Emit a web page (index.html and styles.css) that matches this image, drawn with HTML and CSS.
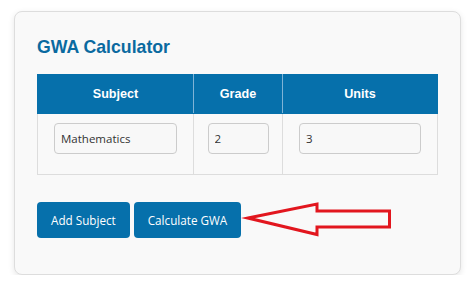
FILE: index.html
```html
<!DOCTYPE html>
<html>
<head>
<meta charset="utf-8">
<link rel="stylesheet" href="styles.css">
</head>
<body>
<div class="card">
  <h2 class="title">GWA Calculator</h2>
  <table class="gwa">
    <colgroup><col class="c1"><col class="c2"><col class="c3"></colgroup>
    <thead>
      <tr><th>Subject</th><th>Grade</th><th>Units</th></tr>
    </thead>
    <tbody>
      <tr>
        <td><input class="in in-subject" type="text" value="Mathematics"></td>
        <td><input class="in in-grade" type="text" value="2"></td>
        <td><input class="in in-units" type="text" value="3"></td>
      </tr>
    </tbody>
  </table>
  <div class="actions">
    <button class="btn">Add Subject</button>
    <button class="btn">Calculate GWA</button>
  </div>
</div>
<svg class="arrow" viewBox="0 0 474 286" width="474" height="286">
  <polygon points="248,218 317,204 317,211 389.5,211 389.5,227 317,227 317,234.5" fill="none" stroke="#e2161e" stroke-width="3" stroke-linejoin="miter" stroke-miterlimit="12"/>
</svg>
</body>
</html>
```
FILE: styles.css
```css
html, body {
  margin: 0;
  background: #ffffff;
}
body {
  padding: 11px 0 0 14px;
  font-family: "Open Sans", "Liberation Sans", sans-serif;
}
.card {
  width: 400px;
  padding: 25px 23px 36px 22px;
  background: #f9f9f9;
  border: 1px solid #dddddd;
  border-radius: 8px;
  box-shadow: 0 2px 6px rgba(0, 0, 0, 0.10);
}
.title {
  margin: 0 0 16px 0;
  font-family: "Liberation Sans", Arial, sans-serif;
  font-weight: bold;
  font-size: 17.7px;
  line-height: 21px;
  color: #0a6aa0;
}
.gwa {
  width: 400px;
  table-layout: fixed;
  border-collapse: collapse;
}
.c1 { width: 156px; }
.c2 { width: 89px; }
.c3 { width: 155px; }
.gwa th {
  background: #0670ab;
  color: #ffffff;
  font-family: "Liberation Sans", Arial, sans-serif;
  font-weight: bold;
  font-size: 12.6px;
  line-height: 14px;
  padding: 12px 0;
  border: 1px solid #0670ab;
  text-align: center;
}
.gwa th:not(:last-child) {
  border-right-color: #7fb3d6;
}
.gwa td {
  border: 1px solid #dddddd;
  padding: 9px 0 10px 0;
  text-align: center;
}
.in {
  display: block;
  box-sizing: border-box;
  height: 31px;
  margin: 0 auto 10px auto;
  padding: 0 6px;
  border: 1px solid #cccccc;
  border-radius: 4px;
  background: #f8f8f8;
  font-family: "Open Sans", "Liberation Sans", sans-serif;
  font-size: 11.5px;
  color: #333333;
}
.in-subject { width: 123px; }
.in-grade { width: 61px; }
.in-units { width: 122px; }
.actions {
  margin-top: 27px;
  display: flex;
  gap: 4px;
}
.btn {
  height: 36px;
  padding: 0 14px;
  border: none;
  border-radius: 4px;
  background: #0670ab;
  color: #ffffff;
  font-family: "Open Sans", "Liberation Sans", sans-serif;
  font-size: 11.7px;
  white-space: nowrap;
}
.arrow {
  position: absolute;
  left: 0;
  top: 0;
  pointer-events: none;
}
```
